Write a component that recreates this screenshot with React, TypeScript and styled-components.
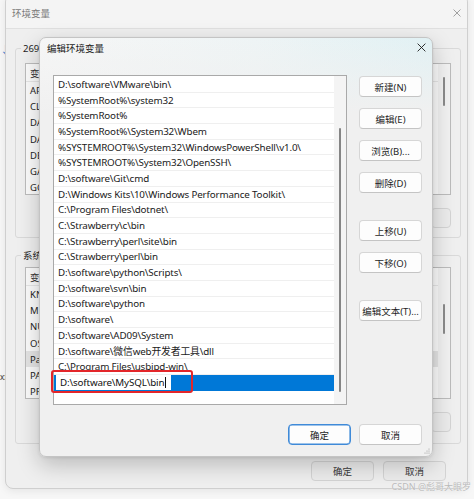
import React from "react";
import styled, { createGlobalStyle, css } from "styled-components";

const UI_FONT = `"Noto Sans", "Noto Sans CJK SC", sans-serif`;

const GlobalStyle = createGlobalStyle`
  html, body { margin: 0; padding: 0; background: #f7f7f7; }
  body { font-family: ${UI_FONT}; }
  * { box-sizing: border-box; }
`;

/* ---------- desktop ---------- */
const Desktop = styled.div`
  position: relative;
  width: 474px;
  height: 499px;
  overflow: hidden;
  background: #f7f7f7;
  font-family: ${UI_FONT};
  color: #1b1b1b;
`;

const DesktopGlyph = styled.span<{ $x: number; $y: number; $color: string; $size: number }>`
  position: absolute;
  left: ${(p) => p.$x}px;
  top: ${(p) => p.$y}px;
  font-size: ${(p) => p.$size}px;
  line-height: 1;
  color: ${(p) => p.$color};
`;

const Watermark = styled.span`
  position: absolute;
  right: 3px;
  bottom: 8px;
  font-size: 9px;
  line-height: 1;
  color: #b9b9b9;
  text-shadow: 0 0 1px #fff;
  white-space: nowrap;
`;

/* ---------- shared bits ---------- */
const WinButton = styled.button<{ $primary?: boolean; $muted?: boolean; $w?: number }>`
  width: ${(p) => p.$w ?? 63}px;
  height: 21px;
  flex: none;
  padding: 0;
  font-family: ${UI_FONT};
  font-size: 9.5px;
  color: #1f1f1f;
  background: #fdfdfd;
  border: 1px solid #d6d6d6;
  border-bottom-color: #c4c4c4;
  border-radius: 4px;
  white-space: nowrap;
  ${(p) =>
    p.$primary &&
    css`
      border-color: #3f8ad8;
      box-shadow: inset 0 0 0 0.6px #3f8ad8;
    `}
  ${(p) =>
    p.$muted &&
    css`
      height: 20px;
      background: #ececec;
      color: #3a3a3a;
      border-color: #d4d4d4;
    `}
`;

const CloseX = ({ size, color }: { size: number; color: string }) => (
  <svg width={size} height={size} viewBox="0 0 10 10">
    <path d="M1 1 L9 9 M9 1 L1 9" stroke={color} strokeWidth="1" strokeLinecap="round" />
  </svg>
);

/* ---------- background window (环境变量) ---------- */
const BackWindow = styled.section`
  position: absolute;
  left: 5px;
  top: -6px;
  width: 463px;
  height: 495px;
  display: flex;
  flex-direction: column;
  background: #efefef;
  border: 1px solid #cfcfcf;
  border-radius: 8px;
  box-shadow: 0 2px 8px rgba(0, 0, 0, 0.08);
`;

const BackTitleBar = styled.header`
  height: 34px;
  flex: none;
  display: flex;
  align-items: center;
  justify-content: space-between;
  padding: 3px 6px 0 6px;
  background: #f4f4f4;
  border-bottom: 1px solid #e0e0e0;
  border-radius: 8px 8px 0 0;
  font-size: 9.5px;
  color: #7a7a7a;
`;

const BackContent = styled.div`
  flex: 1;
  display: flex;
  flex-direction: column;
  gap: 17px;
  padding: 19px 6px 7px 9px;
`;

const Group = styled.div<{ $grow?: boolean }>`
  display: flex;
  flex-direction: column;
  border: 1px solid #d9d9d9;
  border-radius: 3px;
  padding: 0 9px 9px;
  ${(p) => p.$grow && css`flex: 1;`}
`;

const GroupLegend = styled.span<{ $space: number }>`
  align-self: flex-start;
  height: 13px;
  line-height: 13px;
  margin: -7px 0 ${(p) => p.$space}px -4px;
  padding: 0 2px;
  background: #efefef;
  font-size: 9.5px;
  color: #1f1f1f;
  white-space: nowrap;
`;

const ListView = styled.div`
  height: 132px;
  flex: none;
  display: flex;
  border: 1px solid #bcbcbc;
  background: #fbfbfb;
  overflow: hidden;
`;

const ListTable = styled.div`
  flex: 1;
  display: flex;
  flex-direction: column;
  font-size: 9.5px;
`;

const ListHeader = styled.div`
  height: 18px;
  flex: none;
  display: flex;
  align-items: center;
  padding-left: 4px;
  border-bottom: 1px solid #e6e6e6;
  color: #333;
`;

const ListRow = styled.div<{ $selected?: boolean }>`
  height: 16.3px;
  flex: none;
  display: flex;
  align-items: center;
  padding-left: 4px;
  color: #1f1f1f;
  white-space: nowrap;
  overflow: hidden;
  ${(p) => p.$selected && css`background: #e4e4e4;`}
`;

const MiniTrack = styled.div<{ $offset: number }>`
  width: 12px;
  flex: none;
  display: flex;
  justify-content: center;
  padding-top: ${(p) => p.$offset}px;
  background: #f2f2f2;
`;

const MiniThumb = styled.div<{ $len: number }>`
  width: 2px;
  height: ${(p) => p.$len}px;
  border-radius: 1px;
  background: #8a8a8a;
`;

const GroupButtons = styled.div`
  display: flex;
  justify-content: flex-end;
  gap: 8px;
  margin-top: 13px;
`;

const BackFooter = styled.div`
  display: flex;
  justify-content: flex-end;
  gap: 9px;
  padding-right: 15px;
`;

/* ---------- front dialog (编辑环境变量) ---------- */
const Dialog = styled.section`
  position: absolute;
  left: 39px;
  top: 37px;
  width: 394px;
  height: 420px;
  display: flex;
  flex-direction: column;
  border: 1px solid #c4c4c4;
  border-radius: 7px;
  background: linear-gradient(180deg, rgba(240, 240, 240, 0) 0px, #f0f0f0 75px),
    linear-gradient(90deg, #f6f6f6 0%, #eef4f5 55%, #e1f1f4 100%);
  box-shadow: 0 8px 22px rgba(0, 0, 0, 0.22), 0 1px 3px rgba(0, 0, 0, 0.08);
`;

const DialogTitleBar = styled.header`
  height: 19px;
  flex: none;
  display: flex;
  align-items: center;
  justify-content: space-between;
  padding: 0 6px 0 7px;
  font-size: 9.5px;
  color: #1b1b1b;
`;

const DialogBody = styled.div`
  display: flex;
  gap: 12px;
  padding: 18px 10px 0 13px;
`;

const PathList = styled.div`
  position: relative;
  width: 294px;
  height: 330px;
  flex: none;
  display: flex;
  border: 1px solid #a9a9a9;
  background: #fff;
`;

const PathRows = styled.div`
  flex: 1;
  display: flex;
  flex-direction: column;
  padding-top: 1px;
  overflow: hidden;
`;

const PathRow = styled.div<{ $active?: boolean }>`
  height: 15.7px;
  flex: none;
  display: flex;
  align-items: center;
  padding-left: 4px;
  border-bottom: 1px solid #efefef;
  font-size: 9.8px;
  letter-spacing: -0.15px;
  color: #1a1a1a;
  white-space: nowrap;
  overflow: hidden;
  ${(p) =>
    p.$active &&
    css`
      padding-left: 2px;
      background: #0078d7;
      border-bottom-color: #0078d7;
    `}
`;

const EditBox = styled.div`
  width: 115px;
  height: 100%;
  display: flex;
  align-items: center;
  padding-left: 4px;
  background: #fff;
  color: #111;
`;

const Caret = styled.span`
  width: 1px;
  height: 11px;
  margin-left: 1px;
  background: #111;
`;

const PathTrack = styled.div`
  width: 12px;
  flex: none;
  display: flex;
  justify-content: center;
  padding-top: 52px;
  background: #f4f4f4;
`;

const PathThumb = styled.div`
  width: 2px;
  height: 264px;
  border-radius: 1px;
  background: #858585;
`;

const Annotation = styled.div`
  position: absolute;
  left: -3px;
  top: 294px;
  width: 142px;
  height: 23px;
  border: 2px solid #e3262a;
  border-radius: 3px;
  pointer-events: none;
`;

const ButtonColumn = styled.div`
  display: flex;
  flex-direction: column;
  gap: 11px;
  padding-top: 1px;
`;

const SideButton = styled(WinButton)<{ $spaced?: boolean }>`
  ${(p) => p.$spaced && css`margin-top: 16px;`}
`;

const DialogFooter = styled.div`
  display: flex;
  justify-content: flex-end;
  gap: 8px;
  padding: 19px 10px 0 0;
`;

const Grip = styled.svg`
  position: absolute;
  right: 2px;
  bottom: 2px;
`;

/* ---------- data ---------- */
const paths = [
  "D:\\software\\VMware\\bin\\",
  "%SystemRoot%\\system32",
  "%SystemRoot%",
  "%SystemRoot%\\System32\\Wbem",
  "%SYSTEMROOT%\\System32\\WindowsPowerShell\\v1.0\\",
  "%SYSTEMROOT%\\System32\\OpenSSH\\",
  "D:\\software\\Git\\cmd",
  "D:\\Windows Kits\\10\\Windows Performance Toolkit\\",
  "C:\\Program Files\\dotnet\\",
  "C:\\Strawberry\\c\\bin",
  "C:\\Strawberry\\perl\\site\\bin",
  "C:\\Strawberry\\perl\\bin",
  "D:\\software\\python\\Scripts\\",
  "D:\\software\\svn\\bin",
  "D:\\software\\python",
  "D:\\software\\",
  "D:\\software\\AD09\\System",
  "D:\\software\\微信web开发者工具\\dll",
  "C:\\Program Files\\usbipd-win\\",
];

const userVars = ["AP", "CL", "DA", "DA", "DE", "GA", "GO"];
const sysVars = ["KN", "M", "NU", "OS", "Pa", "PA", "PR"];

const VarList = ({
  rows,
  selected,
  thumbOffset,
  thumbLen,
}: {
  rows: string[];
  selected?: number;
  thumbOffset: number;
  thumbLen: number;
}) => (
  <ListView>
    <ListTable>
      <ListHeader>变</ListHeader>
      {rows.map((k, i) => (
        <ListRow key={i} $selected={i === selected}>
          {k}
        </ListRow>
      ))}
    </ListTable>
    <MiniTrack $offset={thumbOffset}>
      <MiniThumb $len={thumbLen} />
    </MiniTrack>
  </ListView>
);

export default function App() {
  return (
    <>
      <GlobalStyle />
      <Desktop>
        <DesktopGlyph $x={0} $y={44} $color="#2f7bd1" $size={11}>
          ↓
        </DesktopGlyph>
        <DesktopGlyph $x={0} $y={373} $color="#333" $size={8}>
          xx
        </DesktopGlyph>

        <BackWindow>
          <BackTitleBar>
            <span>环境变量</span>
            <CloseX size={8} color="#8a8a8a" />
          </BackTitleBar>
          <BackContent>
            <Group>
              <GroupLegend $space={8}>2695</GroupLegend>
              <VarList rows={userVars} thumbOffset={13} thumbLen={29} />
              <GroupButtons>
                <WinButton $muted $w={20} />
              </GroupButtons>
            </Group>
            <Group $grow>
              <GroupLegend $space={5}>系统</GroupLegend>
              <VarList rows={sysVars} selected={4} thumbOffset={36} thumbLen={30} />
              <GroupButtons>
                <WinButton $muted $w={20} />
              </GroupButtons>
            </Group>
            <BackFooter>
              <WinButton $muted>确定</WinButton>
              <WinButton $muted>取消</WinButton>
            </BackFooter>
          </BackContent>
        </BackWindow>

        <Dialog>
          <DialogTitleBar>
            <span>编辑环境变量</span>
            <CloseX size={9} color="#1b1b1b" />
          </DialogTitleBar>
          <DialogBody>
            <PathList>
              <PathRows>
                {paths.map((p) => (
                  <PathRow key={p}>{p}</PathRow>
                ))}
                <PathRow $active>
                  <EditBox>
                    D:\software\MySQL\bin
                    <Caret />
                  </EditBox>
                </PathRow>
              </PathRows>
              <PathTrack>
                <PathThumb />
              </PathTrack>
              <Annotation />
            </PathList>
            <ButtonColumn>
              <SideButton>新建(N)</SideButton>
              <SideButton>编辑(E)</SideButton>
              <SideButton>浏览(B)...</SideButton>
              <SideButton>删除(D)</SideButton>
              <SideButton $spaced>上移(U)</SideButton>
              <SideButton>下移(O)</SideButton>
              <SideButton $spaced>编辑文本(T)...</SideButton>
            </ButtonColumn>
          </DialogBody>
          <DialogFooter>
            <WinButton $primary>确定</WinButton>
            <WinButton>取消</WinButton>
          </DialogFooter>
          <Grip width="7" height="7" viewBox="0 0 7 7">
            <circle cx="6" cy="2" r="0.6" fill="#9a9a9a" />
            <circle cx="4" cy="4" r="0.6" fill="#9a9a9a" />
            <circle cx="6" cy="4" r="0.6" fill="#9a9a9a" />
            <circle cx="2" cy="6" r="0.6" fill="#9a9a9a" />
            <circle cx="4" cy="6" r="0.6" fill="#9a9a9a" />
            <circle cx="6" cy="6" r="0.6" fill="#9a9a9a" />
          </Grip>
        </Dialog>

        <Watermark>CSDN @彪哥大眼罗</Watermark>
      </Desktop>
    </>
  );
}
